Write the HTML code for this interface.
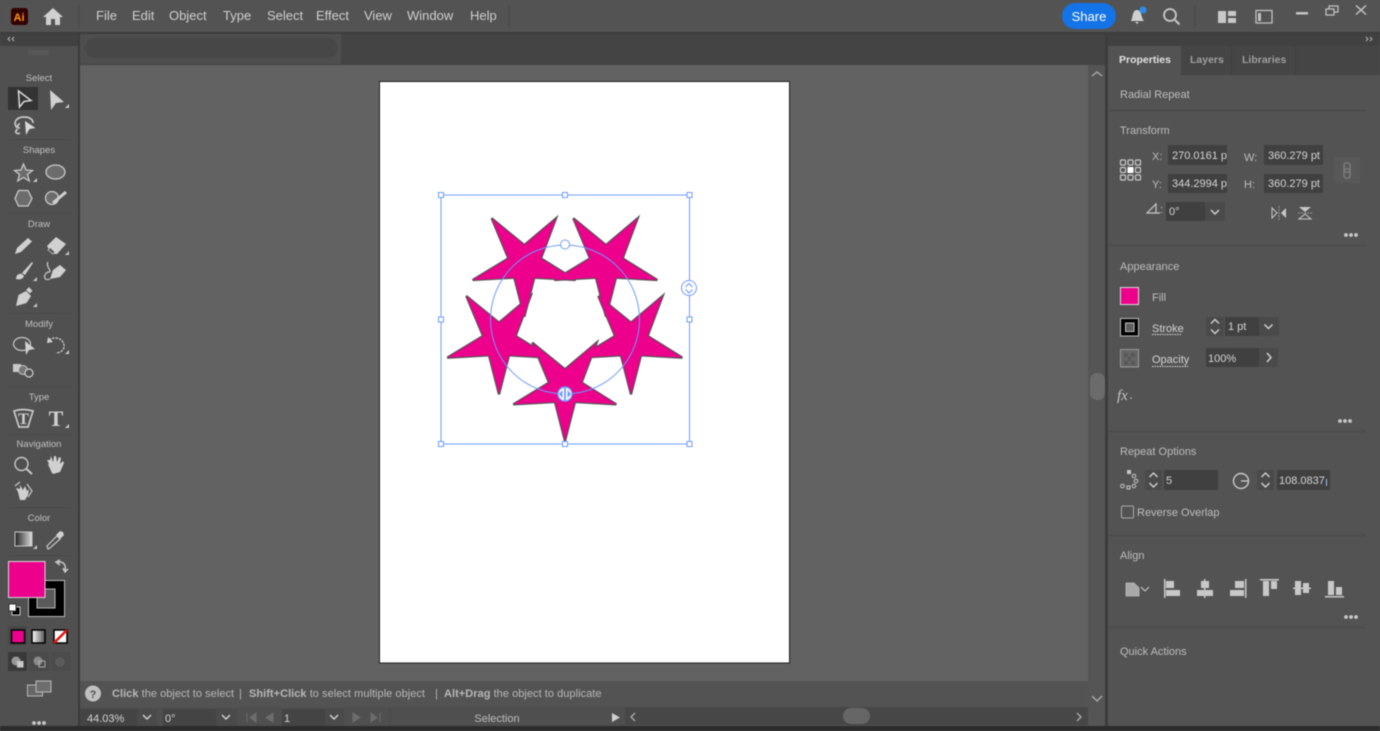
<!DOCTYPE html>
<html><head><meta charset="utf-8"><title>Illustrator</title>
<style>
html,body{margin:0;padding:0;background:#535353;width:1380px;height:731px;overflow:hidden}
svg{display:block;filter:blur(.45px)}
text{font-family:"Liberation Sans",sans-serif;fill:#c4c4c4;font-size:11px}
.m{font-size:13px;fill:#cfcfcf}
.l{font-size:9.5px;fill:#c0c0c0;text-anchor:middle}
.p{font-size:11px;fill:#bdbdbd}
.v{font-size:11px;fill:#d4d4d4}
.i{fill:#c8c8c8}
.s{fill:none;stroke:#c8c8c8;stroke-width:1.5}
.sep{stroke:#484848;stroke-width:1}
.fld{fill:#404040}
.fb{fill:#4a4a4a}
</style></head><body>
<svg width="1380" height="731" viewBox="0 0 1380 731" xmlns="http://www.w3.org/2000/svg">
<defs>
<polygon id="star" points="0,0 -30,-117 -155,-110 -48,-175 -98,-295 0,-215 95,-295 50,-175 154,-110 30,-117"/>
<polygon id="tri" class="i" points="4,0 4,4 0,4"/>
<path id="cd" d="M-4,-2 L0,2 L4,-2" fill="none" stroke="#d0d0d0" stroke-width="1.5"/>
<g id="step"><path d="M-4,-3 L0,-7 L4,-3 M-4,3 L0,7 L4,3" fill="none" stroke="#d0d0d0" stroke-width="1.4"/></g>
<g id="dots" fill="#c8c8c8"><circle cx="-5" cy="0" r="1.9"/><circle cx="0" cy="0" r="1.9"/><circle cx="5" cy="0" r="1.9"/></g>
<linearGradient id="gr"><stop offset="0" stop-color="#222"/><stop offset="1" stop-color="#ddd"/></linearGradient>
<linearGradient id="gr2"><stop offset="0" stop-color="#fff"/><stop offset="1" stop-color="#555"/></linearGradient>
</defs>

<!-- base -->
<rect width="1380" height="731" fill="#535353"/>
<rect x="0" y="0" width="1380" height="33" fill="#535353"/>
<rect x="0" y="32" width="1380" height="2" fill="#3c3c3c"/>

<!-- canvas -->
<rect x="80" y="34" width="1026" height="32" fill="#444"/>
<rect x="80" y="34" width="261" height="30" fill="#4e4e4e"/>
<rect x="85" y="38" width="253" height="20" rx="10" fill="#474747"/>
<rect x="80" y="65" width="1008" height="616" fill="#626262"/>
<rect x="379.5" y="81.5" width="410" height="581.5" fill="#fff" stroke="#1e1e1e" stroke-width="1"/>

<!-- stars -->
<g transform="translate(430 185) scale(.3333)">
<g fill="#555" stroke="#555" stroke-width="7" stroke-linejoin="miter">
<use href="#star" x="405" y="768"/><use href="#star" x="283" y="395"/><use href="#star" x="528" y="395"/><use href="#star" x="207" y="628"/><use href="#star" x="603" y="628"/>
</g>
<g fill="#ec008c">
<use href="#star" x="405" y="768"/><use href="#star" x="283" y="395"/><use href="#star" x="528" y="395"/><use href="#star" x="207" y="628"/><use href="#star" x="603" y="628"/>
</g>
</g>
<!-- selection -->
<g fill="none" stroke="#6e9bff" stroke-width="1">
<rect x="441" y="195" width="248.500" height="249"/>
<circle cx="565" cy="319.500" r="74.500"/>
<g fill="#fff">
<rect x="438.500" y="192.500" width="5" height="5"/><rect x="562.500" y="192.500" width="5" height="5"/><rect x="687" y="192.500" width="5" height="5"/>
<rect x="438.500" y="317" width="5" height="5"/><rect x="687" y="317" width="5" height="5"/>
<rect x="438.500" y="441.500" width="5" height="5"/><rect x="562.500" y="441.500" width="5" height="5"/><rect x="687" y="441.500" width="5" height="5"/>
<circle cx="565" cy="244.500" r="4.500"/>
<circle cx="689" cy="288" r="7.500"/>
<circle cx="565" cy="394" r="7" stroke-width="1.400"/>
</g>
<path d="M685.500,287 L689,283.500 L692.500,287 M685.500,289.500 L689,293 L692.500,289.500" stroke-width="1.100"/>
<path d="M565,387 V401" stroke-width="1.800"/>
</g>
<path d="M562.500,390 V398 L559,394Z M567.500,390 V398 L571,394Z" fill="#6e9bff"/>

<!-- scrollbars -->
<rect x="1088" y="65" width="17" height="661" fill="#555"/>
<rect x="1105" y="34" width="3" height="692" fill="#3c3c3c"/>
<path d="M1092,76 L1097,72 L1102,76" fill="none" stroke="#aaa" stroke-width="1.400"/>
<path d="M1092,696 L1097,701 L1102,696" fill="none" stroke="#aaa" stroke-width="1.400"/>
<rect x="1090" y="373" width="15" height="27" rx="7" fill="#6b6b6b"/>

<!-- top bar -->
<rect x="11" y="8" width="17" height="17" rx="3" fill="#330000"/>
<text x="13.500" y="21" style="font-size:11px;font-weight:bold;fill:#ff9a00">Ai</text>
<path d="M43,17 L53,8 L63,17 H60 V25 H55 V19 H51 V25 H46 V17Z" fill="#d0d0d0"/>
<line x1="79" y1="6" x2="79" y2="26" class="sep"/>
<text class="m" x="96" y="20">File</text>
<text class="m" x="132" y="20">Edit</text>
<text class="m" x="169" y="20">Object</text>
<text class="m" x="223" y="20">Type</text>
<text class="m" x="267" y="20">Select</text>
<text class="m" x="316" y="20">Effect</text>
<text class="m" x="364" y="20">View</text>
<text class="m" x="407" y="20">Window</text>
<text class="m" x="470" y="20">Help</text>
<line x1="509" y1="6" x2="509" y2="26" class="sep"/>
<rect x="1062" y="3" width="54" height="26" rx="13" fill="#1473e6"/>
<text x="1089" y="21" text-anchor="middle" style="font-size:13px;fill:#fff">Share</text>
<path d="M1131,21 C1133,18 1132,10 1137,10 C1142,10 1141,18 1144,21Z M1135,22 H1139 L1137,24Z" fill="#d0d0d0"/>
<circle cx="1143" cy="10" r="3.500" fill="#2d8ceb"/>
<circle cx="1170" cy="15" r="6" fill="none" stroke="#c8c8c8" stroke-width="1.800"/>
<path d="M1175,20 L1179.500,24.500" stroke="#c8c8c8" stroke-width="2"/>
<line x1="1195" y1="6" x2="1195" y2="26" class="sep"/>
<path d="M1218,11 H1226 V23 H1218Z M1228,11 H1236 V16 H1228Z M1228,18 H1236 V23 H1228Z" fill="#c8c8c8"/>
<rect x="1256" y="10.500" width="16" height="12.500" fill="none" stroke="#c0c0c0" stroke-width="1.300"/>
<rect x="1258" y="13" width="3" height="8" fill="#c0c0c0"/>
<rect x="1296" y="12" width="12" height="2.500" fill="#c4c4c4"/>
<path d="M1329,9 V6 H1338 V12 H1334 M1326,9 H1334 V15 H1326Z" fill="none" stroke="#c4c4c4" stroke-width="1.200"/>
<path d="M1356,5.500 L1366,14.500 M1366,5.500 L1356,14.500" stroke="#c4c4c4" stroke-width="1.500"/>

<!-- left toolbar -->
<rect x="0" y="34" width="78" height="692" fill="#505050"/>
<rect x="78" y="34" width="2" height="692" fill="#3a3a3a"/>
<rect x="0" y="34" width="78" height="12" fill="#414141"/>
<path d="M10,37 L8,39 L10,41 M14,37 L12,39 L14,41" fill="none" stroke="#bbb" stroke-width=".9"/>
<rect x="28" y="50" width="21" height="5" fill="#575757"/>
<text class="l" x="39" y="81">Select</text>
<text class="l" x="39" y="153">Shapes</text>
<text class="l" x="39" y="227">Draw</text>
<text class="l" x="39" y="327">Modify</text>
<text class="l" x="39" y="400">Type</text>
<text class="l" x="39" y="447">Navigation</text>
<text class="l" x="39" y="521">Color</text>
<g class="sep">
<line x1="8" y1="139.500" x2="72" y2="139.500"/><line x1="8" y1="213.500" x2="72" y2="213.500"/><line x1="8" y1="313.500" x2="72" y2="313.500"/><line x1="8" y1="386.500" x2="72" y2="386.500"/><line x1="8" y1="434.500" x2="72" y2="434.500"/><line x1="8" y1="507.500" x2="72" y2="507.500"/><line x1="8" y1="555.500" x2="72" y2="555.500"/>
</g>
<rect x="8" y="87" width="30" height="23" fill="#333"/>
<path d="M18.500,91 L31,100.500 L24,101.500 L19.500,107Z" fill="none" stroke="#d8d8d8" stroke-width="1.500"/>
<path d="M50,90 L64,102 L56,103 L51,110Z" fill="#d0d0d0"/>
<use href="#tri" x="65" y="104"/>
<path d="M17,128 C12,121 18,117 24,117 C29,117 33,119 33,123 M20,133 C16,135 14,131 18,129 M20,124 C17,124 17,128 20,128" fill="none" stroke="#c8c8c8" stroke-width="1.700"/>
<path d="M25,121 L35.500,128 L29.500,129 L26,135Z" fill="#d8d8d8"/>
<!-- shapes -->
<polygon points="23.500,164 26,170 32.500,170.500 27.500,174.500 29.300,181 23.500,177.500 17.700,181 19.500,174.500 14.500,170.500 21,170" fill="#6c6c6c" stroke="#c8c8c8" stroke-width="1.300"/>
<use href="#tri" x="33" y="178"/>
<ellipse cx="55.500" cy="172" rx="9.500" ry="7" fill="#6c6c6c" stroke="#c8c8c8" stroke-width="1.300"/>
<polygon points="18.500,190.500 28,190.500 32,198.500 28,206 18.500,206 15,198.500" fill="#6c6c6c" stroke="#c8c8c8" stroke-width="1.300"/>
<circle cx="52" cy="198" r="6.500" fill="#6c6c6c" stroke="#c8c8c8" stroke-width="1.300"/>
<path d="M53,203 L66,192" stroke="#d0d0d0" stroke-width="3"/>
<!-- draw -->
<path d="M15,254 L17,248 L28,238 L32,241.500 L21,252Z" fill="#d0d0d0"/>
<path d="M47,246 L56,237 L66,244 L57,254 L52,254Z" fill="#d0d0d0"/>
<path d="M48,249 L54,254" stroke="#505050" stroke-width="1.400"/>
<path d="M50,247.500 L55,252 L53,254 L48,250Z" fill="#505050" stroke="#d0d0d0" stroke-width=".8"/>
<use href="#tri" x="65" y="251"/>
<path d="M32,262 L22,273 L25,275 L33,263Z" fill="#d0d0d0"/>
<path d="M16,279 C16,275 19,273 22,274 L24,276 C23,279 20,280 16,279Z" fill="#d0d0d0"/>
<use href="#tri" x="33" y="277"/>
<path d="M50,279 L53,270 L60,265 L66,270 L60,277Z" fill="#d0d0d0"/>
<path d="M50,279 C42,282 44,272 49,272 C53,272 45,266 48,262" fill="none" stroke="#c8c8c8" stroke-width="1.200"/>
<path d="M16,306 L18.500,295 L26,291 L31,296 L26.500,303Z" fill="#d0d0d0"/>
<rect x="27" y="288" width="5" height="4" fill="#d0d0d0" transform="rotate(45 29 290)"/>
<use href="#tri" x="33" y="303"/>
<!-- modify -->
<ellipse cx="22" cy="344" rx="8.500" ry="6.500" fill="none" stroke="#c8c8c8" stroke-width="1.200"/>
<path d="M25,341 L35,349 L29,350 L26,355Z" fill="#d0d0d0"/>
<path d="M49,340 C54,336 63,338 64,345 C65,350 60,353 56,353" fill="none" stroke="#c8c8c8" stroke-width="1.300" stroke-dasharray="2.500 1"/>
<path d="M47,343 L48,337 L53,342Z" fill="#d0d0d0"/>
<use href="#tri" x="65" y="350"/>
<rect x="13" y="364" width="8" height="8" fill="#c8c8c8"/>
<circle cx="23" cy="370" r="4.500" fill="#777" stroke="#c8c8c8"/>
<circle cx="29" cy="373" r="4" fill="#505050" stroke="#d0d0d0" stroke-width="1.200"/>
<!-- type -->
<path d="M14,411 Q23,408 33,411 L28,427 H19Z" fill="none" stroke="#c8c8c8" stroke-width="1.700"/>
<text x="23.500" y="424" text-anchor="middle" style="font-family:'Liberation Serif',serif;font-size:16px;font-weight:bold;fill:#d0d0d0">T</text>
<text x="56" y="426" text-anchor="middle" style="font-family:'Liberation Serif',serif;font-size:22px;font-weight:bold;fill:#d0d0d0">T</text>
<use href="#tri" x="65" y="424"/>
<!-- nav -->
<circle cx="21.500" cy="464" r="6.500" fill="none" stroke="#c8c8c8" stroke-width="1.400"/>
<path d="M26.500,469 L32,474" stroke="#c8c8c8" stroke-width="2"/>
<path d="M49,464 L47,460 L50,460 L51,456 L53,462 L54,457 V456 L56,456 L57,462 L59,457 L61,458 L60,464 L63,461 L64,463 L60,472 L53,474Z" fill="#d0d0d0"/>
<path d="M49,464 L53,473" stroke="#d0d0d0" stroke-width="2"/>
<path d="M18,492 L16,488 L20,489 L20,485 L23,490 L25,486 L27,491 L29,489 L28,495 L25,500 L20,500Z" fill="#d0d0d0"/>
<path d="M15,486 L20,482 M27,484 L32,491 L28,497" fill="none" stroke="#c8c8c8" stroke-width="1.200"/>
<!-- color -->
<rect x="15" y="532" width="17" height="14" fill="url(#gr)" stroke="#c8c8c8"/>
<use href="#tri" x="33" y="545"/>
<path d="M48,549 L47,546 L57,536 L60,539 L50,548Z" fill="none" stroke="#c8c8c8" stroke-width="1.200"/>
<path d="M56,535 L60,531 L63,532 L64,535 L60,539Z" fill="#d0d0d0"/>
<rect x="28.500" y="580.500" width="36" height="36" fill="#000" stroke="#b8b8b8"/>
<rect x="37" y="589" width="18" height="19" fill="#5a5a5a" stroke="#b8b8b8"/>
<rect x="8.500" y="561.500" width="36.500" height="36" fill="#ec008c" stroke="#d8d8d8"/>
<path d="M57,562 L61,562 C65,563 66,567 65,571 M63,568 L65,572 L68,569 M60,560 L56,562 L60,565" fill="none" stroke="#c8c8c8" stroke-width="1.500"/>
<rect x="12" y="607" width="8" height="8" fill="#000" stroke="#c8c8c8"/>
<rect x="9" y="604" width="7" height="7" fill="#fff" stroke="#333"/>
<rect x="8" y="626" width="19" height="19" fill="#474747"/>
<rect x="11.500" y="630" width="13" height="13" fill="#ec008c" stroke="#000" stroke-width="1.500"/>
<rect x="32" y="630" width="13" height="13" fill="url(#gr2)" stroke="#000" stroke-width="1.500"/>
<rect x="54" y="630" width="13" height="13" fill="#fff" stroke="#000" stroke-width="1.500"/>
<path d="M54,643 L67,630" stroke="#e11" stroke-width="2.500"/>
<rect x="8" y="652" width="19" height="19" fill="#3a3a3a"/>
<rect x="29" y="652" width="20" height="19" fill="#4a4a4a"/>
<rect x="51" y="652" width="20" height="19" fill="#4c4c4c"/>
<circle cx="16" cy="661" r="4.500" fill="#999"/><rect x="17" y="661" width="6.500" height="6.500" fill="#c8c8c8"/>
<circle cx="38" cy="661" r="4.500" fill="#8a8a8a"/><rect x="39" y="661" width="6" height="6" fill="none" stroke="#aaa"/>
<circle cx="60" cy="662" r="4" fill="#5a5a5a" stroke="#636363"/>
<rect x="27.500" y="685" width="15" height="11" fill="#666" stroke="#b8b8b8"/>
<rect x="36" y="681" width="15" height="11" fill="#6e6e6e" stroke="#b8b8b8"/>
<use href="#dots" x="39" y="723"/>

<!-- hint bar -->
<rect x="80" y="681" width="1008" height="26" fill="#535353"/>
<circle cx="93" cy="693.500" r="8" fill="#c0c0c0"/>
<text x="93" y="698" text-anchor="middle" style="font-size:11px;font-weight:bold;fill:#535353">?</text>
<text x="112" y="697" style="font-size:11px;fill:#b8b8b8;letter-spacing:.04px"><tspan font-weight="bold">Click</tspan> the object to select<tspan x="239">|</tspan><tspan x="249" font-weight="bold">Shift+Click</tspan> to select multiple object<tspan x="435">|</tspan><tspan x="444" font-weight="bold">Alt+Drag</tspan> the object to duplicate</text>

<!-- status bar -->
<rect x="80" y="707" width="1008" height="19" fill="#4f4f4f"/>
<rect x="80" y="709" width="57" height="17" fill="#444"/><rect x="137" y="709" width="20" height="17" fill="#4a4a4a"/>
<rect x="163" y="709" width="53" height="17" fill="#444"/><rect x="216" y="709" width="21" height="17" fill="#4a4a4a"/>
<rect x="282" y="709" width="43" height="17" fill="#444"/><rect x="325" y="709" width="19" height="17" fill="#4a4a4a"/>
<text class="v" x="87" y="722">44.03%</text>
<text class="v" x="165" y="722">0°</text>
<text class="v" x="284" y="722">1</text>
<use href="#cd" x="147" y="717"/><use href="#cd" x="226" y="717"/><use href="#cd" x="334" y="717"/>
<path d="M247,713 V722 M256,713 L250,717.500 L256,722Z M273,713 L266,717.500 L273,722Z M353,713 L360,717.500 L353,722Z M371,713 L377,717.500 L371,722Z M380,713 V722" stroke="#6c6c6c" fill="#6c6c6c"/>
<line x1="390" y1="708" x2="390" y2="725" class="sep"/>
<text x="497" y="722" text-anchor="middle" style="font-size:11px;fill:#bdbdbd">Selection</text>
<path d="M612,713 L620,717.500 L612,722Z" fill="#d0d0d0"/>
<rect x="625" y="707" width="463" height="18" fill="#474747"/>
<path d="M635,713 L631,717 L635,721 M1077,713 L1081,717 L1077,721" fill="none" stroke="#aaa" stroke-width="1.400"/>
<rect x="843" y="708" width="27" height="16" rx="8" fill="#666"/>

<rect x="0" y="726" width="1380" height="5" fill="#2c2c2c"/>

<!-- right panel -->
<rect x="1108" y="34" width="272" height="692" fill="#535353"/>
<rect x="1108" y="34" width="272" height="12" fill="#414141"/>
<path d="M1366,37 L1368,39 L1366,41 M1370,37 L1372,39 L1370,41" fill="none" stroke="#bbb" stroke-width=".9"/>
<rect x="1108" y="46" width="272" height="29" fill="#454545"/>
<rect x="1108" y="46" width="73" height="29" fill="#535353"/>
<line x1="1231.500" y1="46" x2="1231.500" y2="75" stroke="#3f3f3f"/><line x1="1295.500" y1="46" x2="1295.500" y2="75" stroke="#3f3f3f"/>
<text x="1119" y="63" style="font-size:10.500px;font-weight:bold;fill:#e2e2e2">Properties</text>
<text x="1190" y="63" style="font-size:10.500px;font-weight:bold;fill:#a0a0a0">Layers</text>
<text x="1242" y="63" style="font-size:10.500px;font-weight:bold;fill:#a0a0a0">Libraries</text>
<text class="p" x="1120" y="98">Radial Repeat</text>
<g class="sep"><line x1="1109" y1="110.500" x2="1366" y2="110.500"/><line x1="1109" y1="245.500" x2="1366" y2="245.500"/><line x1="1109" y1="431.500" x2="1366" y2="431.500"/><line x1="1109" y1="535.500" x2="1366" y2="535.500"/><line x1="1109" y1="627.500" x2="1366" y2="627.500"/></g>

<text class="p" x="1120" y="134">Transform</text>
<g fill="none" stroke="#c8c8c8" stroke-width="1.200">
<rect x="1120.500" y="160" width="5" height="5" rx="1"/><rect x="1128" y="160" width="5" height="5" rx="1"/><rect x="1135.500" y="160" width="5" height="5" rx="1"/>
<rect x="1120.500" y="167.500" width="5" height="5" rx="1"/><rect x="1135.500" y="167.500" width="5" height="5" rx="1"/>
<rect x="1120.500" y="175" width="5" height="5" rx="1"/><rect x="1128" y="175" width="5" height="5" rx="1"/><rect x="1135.500" y="175" width="5" height="5" rx="1"/>
</g>
<rect x="1127.500" y="167" width="6" height="6" fill="#fff"/>
<text class="p" x="1152" y="160">X:</text><text class="p" x="1152" y="188">Y:</text>
<text class="p" x="1244" y="161">W:</text><text class="p" x="1244" y="188">H:</text>
<rect class="fld" x="1168" y="145" width="59" height="20"/><rect class="fld" x="1168" y="174" width="59" height="19"/>
<rect class="fld" x="1264" y="145" width="59" height="20"/><rect class="fld" x="1264" y="174" width="59" height="19"/>
<text class="v" x="1172" y="159">270.0161 p</text><text class="v" x="1172" y="187">344.2994 p</text>
<text class="v" x="1268" y="159">360.279 pt</text><text class="v" x="1268" y="187">360.279 pt</text>
<rect x="1334" y="157" width="26" height="26" fill="#585858"/>
<path d="M1344,165 C1344,162 1350,162 1350,165 V170 C1350,173 1344,173 1344,170Z M1344,171 C1344,168 1350,168 1350,171 V176 C1350,179 1344,179 1344,176Z" fill="none" stroke="#808080" stroke-width="1.300"/>
<path d="M1147,213 L1156,204 V213Z M1147,213 H1160" fill="none" stroke="#c8c8c8" stroke-width="1.200"/>
<text class="p" x="1160" y="213">:</text>
<rect class="fld" x="1166" y="202" width="39" height="19"/><rect class="fb" x="1205" y="202" width="20" height="19"/>
<text class="v" x="1169" y="215">0°</text><use href="#cd" x="1215" y="212"/>
<path d="M1272,208 L1277,213 L1272,218Z" fill="none" stroke="#c8c8c8"/><path d="M1286,208 L1281,213 L1286,218Z" fill="#c8c8c8"/><path d="M1279,206 V220" stroke="#999" stroke-dasharray="2 1"/>
<path d="M1299,207 H1311 L1305,212Z" fill="#c8c8c8"/><path d="M1299,219 H1311 L1305,214Z" fill="none" stroke="#c8c8c8"/><path d="M1298,213 H1312" stroke="#999" stroke-dasharray="2 1"/>
<use href="#dots" x="1351" y="235"/>

<text class="p" x="1120" y="270">Appearance</text>
<rect x="1120.500" y="287.500" width="18" height="17" fill="#ec008c" stroke="#ddd"/>
<text class="p" x="1152" y="301">Fill</text>
<rect x="1120.500" y="318.500" width="18" height="17.500" fill="#000" stroke="#bbb"/>
<rect x="1125.500" y="323" width="8.500" height="8.500" fill="#5e5e5e" stroke="#bbb"/>
<text class="p" x="1152" y="332" style="fill:#d4d4d4">Stroke</text>
<path d="M1152,334.500 H1182" stroke="#ddd" stroke-dasharray="1.500 1"/>
<rect class="fb" x="1206" y="317" width="18" height="19"/><use href="#step" x="1215" y="326.500"/>
<rect class="fld" x="1225" y="317" width="34" height="19"/><rect class="fb" x="1259" y="317" width="20" height="19"/>
<text class="v" x="1228" y="330">1 pt</text><use href="#cd" x="1268.500" y="326.500"/>
<rect x="1120.500" y="349.500" width="18" height="17.500" fill="#666" stroke="#9a9a9a"/>
<path d="M1124,353 h4 v4 h-4z M1131,353 h4 v4 h-4z M1128,357 h3 v4 h-3z M1124,361 h4 v4 h-4z M1131,361 h4 v4 h-4z" fill="#585858"/>
<text class="p" x="1152" y="363" style="fill:#d4d4d4">Opacity</text>
<path d="M1152,366.500 H1188" stroke="#ddd" stroke-dasharray="1.500 1"/>
<rect class="fld" x="1206" y="348" width="53" height="19"/><rect class="fb" x="1259" y="348" width="19" height="19"/>
<text class="v" x="1208" y="362">100%</text>
<path d="M1267,353 L1271,357.500 L1267,362" fill="none" stroke="#d0d0d0" stroke-width="1.500"/>
<text x="1117" y="400" style="font-family:'Liberation Serif',serif;font-style:italic;font-size:15px;fill:#c4c4c4">fx</text>
<circle cx="1131" cy="398" r=".8" fill="#c4c4c4"/>
<use href="#dots" x="1345" y="421"/>

<text class="p" x="1120" y="455">Repeat Options</text>
<g fill="none" stroke="#c8c8c8"><rect x="1127.500" y="470.500" width="3" height="3" fill="#c8c8c8"/><circle cx="1134" cy="476" r="1.800"/><circle cx="1136" cy="481" r="1.800"/><circle cx="1134" cy="486" r="1.800"/><rect x="1127" y="486" width="3" height="3"/><circle cx="1122.500" cy="486" r="1.800"/></g>
<rect class="fb" x="1145" y="470" width="17" height="20"/><use href="#step" x="1153.500" y="480"/>
<rect class="fld" x="1164" y="470" width="54" height="20"/><text class="v" x="1166" y="484">5</text>
<circle cx="1241" cy="481" r="7.500" fill="none" stroke="#c8c8c8" stroke-width="1.400"/><path d="M1241,481 H1249" stroke="#c8c8c8" stroke-width="1.400"/>
<rect class="fb" x="1257" y="470" width="17" height="20"/><use href="#step" x="1265.500" y="480"/>
<rect class="fld" x="1277" y="470" width="53" height="20"/><text class="v" x="1279" y="484">108.0837</text>
<path d="M1326.500,479 V486" stroke="#9cc4e8"/>
<rect x="1121.500" y="506" width="12" height="12" rx="1.500" fill="none" stroke="#aaa"/>
<text class="p" x="1137" y="516">Reverse Overlap</text>

<text class="p" x="1120" y="559">Align</text>
<path d="M1126,583 H1134 L1139,588 V596 H1126Z" fill="#a8a8a8" stroke="#bbb" stroke-width=".8"/>
<path d="M1141,587 L1145,591 L1149,587" fill="none" stroke="#c8c8c8" stroke-width="1.100"/>
<g fill="#c8c8c8">
<rect x="1164" y="579" width="1.500" height="19"/><rect x="1166" y="581" width="8" height="7"/><rect x="1166" y="590" width="14" height="6"/>
<rect x="1204" y="579" width="1.500" height="19"/><rect x="1201" y="581" width="8" height="7"/><rect x="1197" y="590" width="16" height="6"/>
<rect x="1245" y="579" width="1.500" height="19"/><rect x="1235" y="581" width="9" height="7"/><rect x="1230" y="590" width="14" height="6"/>
<rect x="1260" y="579" width="19" height="1.500"/><rect x="1263" y="581" width="6" height="15"/><rect x="1271" y="581" width="6" height="8"/>
<rect x="1293" y="587.500" width="18" height="1.500"/><rect x="1295" y="581" width="6" height="14"/><rect x="1303" y="583" width="6" height="10"/>
<rect x="1325" y="596" width="19" height="1.500"/><rect x="1328" y="581" width="6" height="14"/><rect x="1336" y="587" width="6" height="8"/>
</g>
<use href="#dots" x="1351" y="617"/>
<text class="p" x="1120" y="655">Quick Actions</text>
</svg>
</body></html>
